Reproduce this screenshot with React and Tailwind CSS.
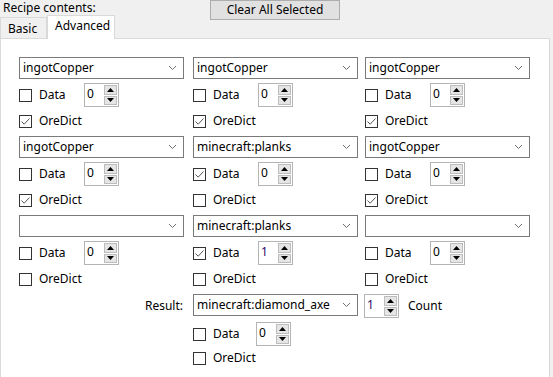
import React from 'react'

const font = "font-['Noto_Sans','Open_Sans',sans-serif]"

function Combo({ value }) {
  return (
    <div className="w-[165px] h-[22px] border border-[#7a7a7a] bg-white flex items-center pl-[3px] pr-[6px]">
      <span className="flex-1 text-[12px] leading-none text-black">{value}</span>
      <svg width="9" height="6" viewBox="0 0 9 6" className="shrink-0">
        <path d="M1 1 L4.5 4.5 L8 1" fill="none" stroke="#6f6f6f" strokeWidth="1" />
      </svg>
    </div>
  )
}

function Spinner({ value, color = 'text-black' }) {
  return (
    <div className="w-[35px] h-[24px] border border-[#b4b4b4] bg-white flex">
      <div className={`flex-1 pl-[2px] pt-[2px] text-[12px] leading-[16px] ${color}`}>{value}</div>
      <div className="w-[14px] flex flex-col py-[1px] pr-[1px] gap-[1px]">
        <div className="flex-1 bg-[#e5e5e5] border border-[#bdbdbd] flex items-center justify-center">
          <svg width="7" height="4" viewBox="0 0 7 4"><path d="M0 4 L3.5 0 L7 4 Z" fill="#000" /></svg>
        </div>
        <div className="flex-1 bg-[#e5e5e5] border border-[#bdbdbd] flex items-center justify-center">
          <svg width="7" height="4" viewBox="0 0 7 4"><path d="M0 0 L3.5 4 L7 0 Z" fill="#000" /></svg>
        </div>
      </div>
    </div>
  )
}

function Check({ checked, label }) {
  return (
    <div className="flex items-center gap-[7px]">
      <div className="w-[13px] h-[13px] border border-[#333] bg-white flex items-center justify-center">
        {checked && (
          <svg width="11" height="11" viewBox="0 0 11 11">
            <path d="M1.5 5.5 L4.2 8.2 L9.5 2.5" fill="none" stroke="#555" strokeWidth="1" />
          </svg>
        )}
      </div>
      <span className="text-[12px] leading-none text-black">{label}</span>
    </div>
  )
}

function Slot({ item, data, ore, num = '0' }) {
  return (
    <div className="flex flex-col pb-[1px]">
      <Combo value={item} />
      <div className="mt-[4px] h-[24px] flex items-center">
        <div className="w-[65px]"><Check checked={data} label="Data" /></div>
        <Spinner value={num} color={num === '1' ? 'text-[#2a0a66]' : 'text-black'} />
      </div>
      <div className="h-[28px] flex items-center">
        <Check checked={ore} label="OreDict" />
      </div>
    </div>
  )
}

const slots = [
  { item: 'ingotCopper', data: false, ore: true },
  { item: 'ingotCopper', data: false, ore: true },
  { item: 'ingotCopper', data: false, ore: true },
  { item: 'ingotCopper', data: false, ore: true },
  { item: 'minecraft:planks', data: true, ore: false },
  { item: 'ingotCopper', data: false, ore: true },
  { item: '', data: false, ore: false },
  { item: 'minecraft:planks', data: true, ore: false, num: '1' },
  { item: '', data: false, ore: false },
]

export default function App() {
  return (
    <div className={`w-[553px] h-[377px] bg-[#f0f0f0] overflow-hidden ${font}`}>
      <div className="h-[15px] flex items-start">
        <span className="ml-[3px] mt-[1px] w-[207px] text-[12px] leading-[14px] text-black">Recipe contents:</span>
        <button className="w-[130px] h-[20px] bg-[#e1e1e1] border border-[#adadad] text-[12px] leading-none text-black relative z-10">
          Clear All Selected
        </button>
      </div>

      <div className="flex items-end h-[23px]">
        <div className="w-[47px] h-[21px] border border-b-0 border-[#d9d9d9] bg-[#f0f0f0] pl-[7px] pt-[5px] text-[12px] leading-none text-black">
          Basic
        </div>
        <div className="w-[68px] h-[24px] border border-b-0 border-[#d9d9d9] bg-white pl-[7px] pt-[4px] text-[12px] leading-none text-black relative z-10 -mb-[1px]">
          Advanced
        </div>
      </div>

      <div className="w-[550px] h-[400px] bg-white border border-[#d9d9d9] pt-[18px] pl-[18px]">
        <div className="grid grid-cols-[174px_172px_165px]">
          {slots.map((s, i) => (
            <Slot key={i} {...s} />
          ))}
          <div className="h-[24px] flex items-center justify-end pr-[10px] text-[12px] leading-none text-black">
            Result:
          </div>
          <div className="flex flex-col">
            <div className="h-[24px] flex items-start">
              <Combo value="minecraft:diamond_axe" />
            </div>
            <div className="mt-[4px] h-[24px] flex items-center">
              <div className="w-[63px]"><Check checked={false} label="Data" /></div>
              <Spinner value="0" />
            </div>
            <div className="h-[24px] flex items-center">
              <Check checked={false} label="OreDict" />
            </div>
          </div>
          <div className="h-[24px] flex items-center -ml-[1px]">
            <Spinner value="1" color="text-[#2a0a66]" />
            <span className="ml-[9px] text-[12px] leading-none text-black">Count</span>
          </div>
        </div>
      </div>
    </div>
  )
}
